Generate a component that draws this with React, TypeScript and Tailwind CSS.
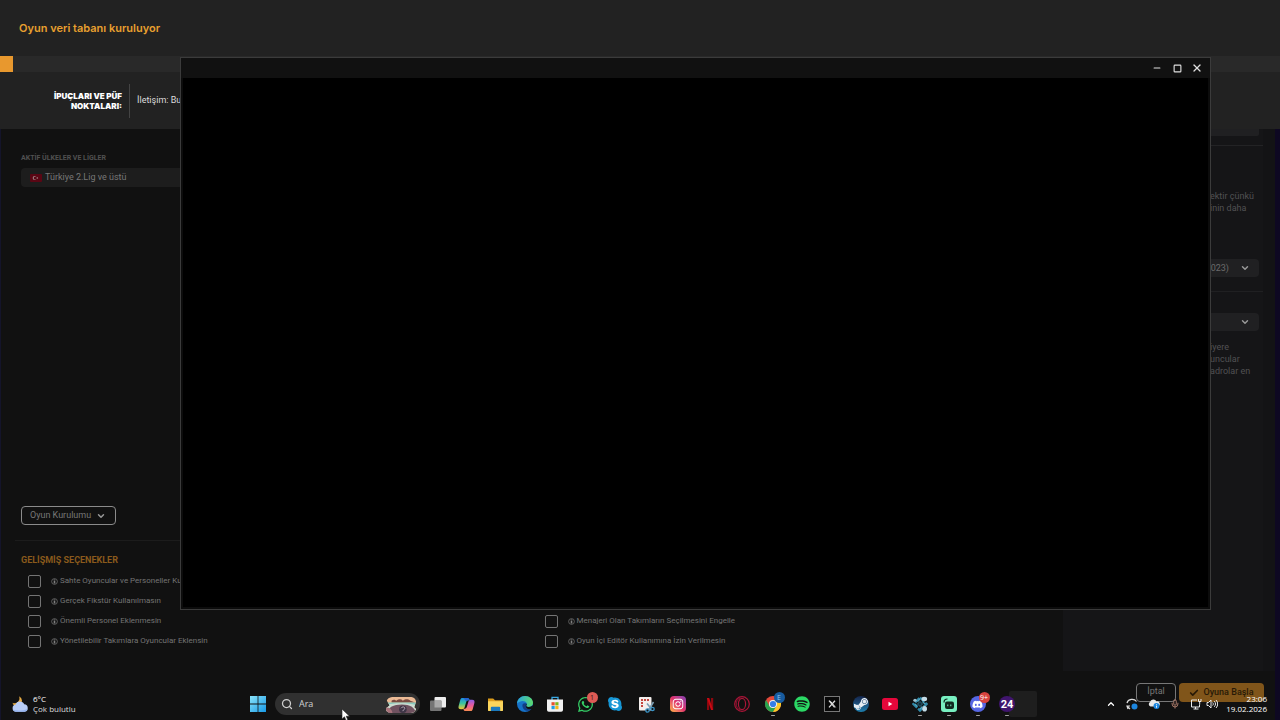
import type { ReactNode } from "react"
import { Check, ChevronDown, ChevronUp, Mic, Minus, Search, Square, X } from "lucide-react"
import { FaDiscord, FaInstagram, FaSkype, FaSpotify, FaSteamSymbol, FaWhatsapp } from "react-icons/fa"

const OPTIONS_LEFT = [
    "Sahte Oyuncular ve Personeller Kullanılsın",
    "Gerçek Fikstür Kullanılmasın",
    "Önemli Personel Eklenmesin",
    "Yönetilebilir Takımlara Oyuncular Eklensin",
]

const OPTIONS_RIGHT = ["Menajeri Olan Takımların Seçilmesini Engelle", "Oyun İçi Editör Kullanımına İzin Verilmesin"]

function InfoIcon() {
    return (
        <svg viewBox="0 0 8 8" className="h-[7px] w-[7px] shrink-0">
            <circle cx="4" cy="4" r="3.3" fill="none" stroke="#666" strokeWidth="1" />
            <path d="M4 1.6v1.200M4 3.500v2.800" stroke="#808080" strokeWidth="1.8" />
        </svg>
    )
}

function Option({ label }: { label: string }) {
    return (
        <label className="flex h-5 items-center whitespace-nowrap text-[8px] text-[#747474]">
            <input
                type="checkbox"
                className="mr-[10px] h-[13px] w-[13px] shrink-0 appearance-none rounded-[2px] border border-[#747474]"
            />
            <InfoIcon />
            <span className="ml-[2px]">{label}</span>
        </label>
    )
}

function Flag() {
    return (
        <svg viewBox="0 0 12 8" className="h-2 w-3">
            <rect width="12" height="8" rx="1" fill="#5a0614" />
            <circle cx="4.6" cy="4" r="1.9" fill="#a08a8c" />
            <circle cx="5.2" cy="4" r="1.5" fill="#5a0614" />
            <circle cx="7.4" cy="4" r=".7" fill="#a08a8c" />
        </svg>
    )
}

function WeatherIcon() {
    return (
        <svg viewBox="0 0 18 18" className="h-[18px] w-[18px]">
            <path d="M8 1.2a5 5 0 0 1-6.6 6.6A5 5 0 0 0 5 11.5a6 6 0 0 0 6-6A5 5 0 0 0 8 1.2Z" fill="#e9ac44" />
            <path d="M4.8 16.8a3.7 3.7 0 0 1-.2-7.3 4.6 4.6 0 0 1 8.6-.2 3.8 3.8 0 0 1 .6 7.5Z" fill="#b9cdf6" />
            <path d="M1.7 14.5c3 1.3 10 1.3 14.8-.6a3.7 3.7 0 0 1-3 2.9H4.8a3.7 3.7 0 0 1-3.1-2.3Z" fill="#94b2ee" />
        </svg>
    )
}

function StartIcon() {
    return (
        <svg viewBox="0 0 16 16" className="h-4 w-4">
            <defs>
                <linearGradient id="start" x1="0" y1="0" x2="1" y2="1">
                    <stop offset="0" stopColor="#8be4fb" />
                    <stop offset="1" stopColor="#1799e6" />
                </linearGradient>
            </defs>
            <path d="M0 0h7.6v7.6H0zM8.4 0H16v7.6H8.4zM0 8.4h7.6V16H0zM8.4 8.4H16V16H8.4z" fill="url(#start)" />
        </svg>
    )
}

function SearchArt() {
    return (
        <svg viewBox="0 0 34 18" className="h-[17px] w-[34px]">
            <defs>
                <clipPath id="art">
                    <path d="M2 5Q3 1 9 1h18q5 0 6 5l-2 6 2 2q-2 4-6 4H7q-6 0-6-5l4-3Z" />
                </clipPath>
            </defs>
            <g clipPath="url(#art)">
                <rect width="34" height="18" fill="#ecbb96" />
                <path d="M7 5c2-2 4-1 5 0 3-2 5-2 7 0 3-2 5-2 8 0l5 2H7Z" fill="#7a4b41" />
                <path d="M0 7h34v3H0z" fill="#86cabe" />
                <path d="M0 10c8-3 26-3 34 0v8H0Z" fill="#cbdcd1" />
                <path d="M3 18c0-6 6-9 15-9s13 3 15 9Z" fill="#705260" />
                <path d="M0 12c5 0 7 2 8 6H0Z" fill="#a8737b" />
                <circle cx="19" cy="14" r="4" fill="#3e3546" />
                <path d="M17 13c1-2 4-2 4 0s-2 1-2 3" stroke="#b7a6b5" strokeWidth="1" fill="none" />
            </g>
        </svg>
    )
}

function TaskViewIcon() {
    return (
        <svg viewBox="0 0 16 16" className="h-4 w-4">
            <rect x="4.5" y="1" width="11.5" height="10.5" rx="1" fill="#ececec" />
            <rect x="0" y="4.5" width="11.5" height="10.5" rx="1" fill="#747474" />
            <path d="M4.500 4.500h7v7h-7z" fill="#a8a8a8" />
        </svg>
    )
}

function CopilotIcon() {
    return (
        <svg viewBox="0 0 18 16" className="h-[15px] w-[17px]">
            <defs>
                <linearGradient id="copA" x1="0" y1="0" x2="0" y2="1">
                    <stop offset="0" stopColor="#1b8de0" />
                    <stop offset=".5" stopColor="#3ec49c" />
                    <stop offset="1" stopColor="#f4c832" />
                </linearGradient>
                <linearGradient id="copB" x1="0" y1="0" x2="0" y2="1">
                    <stop offset="0" stopColor="#8b5fe6" />
                    <stop offset=".5" stopColor="#e95a9b" />
                    <stop offset="1" stopColor="#f98b50" />
                </linearGradient>
            </defs>
            <path d="M4.500 1h5.500c1.500 0 2 1 2.400 2.500H11c-1.600 0-2 .8-2.400 2L7 11c-.4 1.300-1.200 2-2.500 2H3c-2 0-3-1.300-2.400-3.500L2.400 3C2.800 1.700 3.400 1 4.500 1Z" fill="url(#copA)" />
            <path d="M13.500 15H8c-1.500 0-2-1-2.400-2.500H7c1.600 0 2-.8 2.400-2L11 5c.4-1.300 1.200-2 2.500-2H15c2 0 3 1.300 2.400 3.500L15.600 13c-.4 1.300-1 2-2.100 2Z" fill="url(#copB)" />
            <path d="M5.500 1H10c1.500 0 2 1 2.400 2.500H11c-1 0-1.600.4-2 1.200Z" fill="#2463cf" />
        </svg>
    )
}

function ExplorerIcon() {
    return (
        <svg viewBox="0 0 18 16" className="h-[15px] w-[17px]">
            <path d="M1 1.500h5.500L8.500 3.500H16a1 1 0 0 1 1 1V8H1Z" fill="#dd9d1c" />
            <path d="M1 4.500h16V14a1 1 0 0 1-1 1H2a1 1 0 0 1-1-1Z" fill="#fbd55c" />
            <path d="M4 15v-3.500a1 1 0 0 1 1-1h8a1 1 0 0 1 1 1V15Z" fill="#1b79bd" />
        </svg>
    )
}

function EdgeIcon() {
    return (
        <svg viewBox="0 0 16 16" className="h-4 w-4">
            <defs>
                <linearGradient id="edge" x1="0" y1="0" x2="1" y2="0">
                    <stop offset="0" stopColor="#2aa5e0" />
                    <stop offset="1" stopColor="#5cdb6c" />
                </linearGradient>
            </defs>
            <circle cx="8" cy="8" r="8" fill="#1672c8" />
            <path d="M0 7.600C.4 3.200 3.800 0 8 0c4.600 0 8 3.200 8 6.800 0 2.600-2 4.200-4.200 4.200-2 0-2.900-.8-2.400-1.600.5-.9.600-1.500.2-2.400C8.400 4.200 3 4.200 0 7.600Z" fill="url(#edge)" />
            <path d="M5.400 9.500c0 3 2.400 5.500 6 5.300 1.400-.1 2.500-1 3.300-2-3 1.200-6.700.3-6-3.200.2-1 .6-1.300.6-2C7.500 6.600 5.400 7.400 5.400 9.500Z" fill="#123d86" />
            <path d="M9.500 7.500c.5.900.1 1.600-.2 2.100-.4.800.6 1.400 2.500 1.400 1.500 0 2.900-.6 3.600-1.700l.6 1.200-1 2.200c-3 1.200-6.800.3-6.400-3.100Z" fill="#111" />
        </svg>
    )
}

function StoreIcon() {
    return (
        <svg viewBox="0 0 16 16" className="h-4 w-4">
            <path d="M5 4V1.300h6V4" fill="none" stroke="#38a9e5" strokeWidth="1.300" />
            <path d="M0 3.500h16V14a1.800 1.800 0 0 1-1.800 1.800H1.800A1.800 1.800 0 0 1 0 14Z" fill="#f1f1f1" />
            <path d="M4.500 6.200h3.200v3.200H4.500z" fill="#e5502c" />
            <path d="M8.300 6.200h3.200v3.200H8.300z" fill="#7cb518" />
            <path d="M4.500 10h3.200v3.200H4.500z" fill="#1d9de4" />
            <path d="M8.300 10h3.200v3.200H8.300z" fill="#f4b61a" />
        </svg>
    )
}

function SkypeIcon() {
    return (
        <span className="relative flex h-4 w-4 items-center justify-center">
            <span className="absolute h-[11px] w-[11px] rounded-full bg-white" />
            <FaSkype className="relative h-4 w-4 text-[#1697d6]" />
        </span>
    )
}

function SnippingIcon() {
    return (
        <svg viewBox="0 0 17 17" className="h-[17px] w-[17px]">
            <rect x="1" y="1" width="12.500" height="13.500" rx="1" fill="#f3efed" />
            <path d="M3 3h2v2H3zM6 3h2v2H6zM9 3h2v2H9zM3 6h2v2H3zM3 9h2v2H3z" fill="#c4473f" />
            <path d="m9 7.500 4.500 5.500M15.500 6l-5 8" stroke="#7d9fb3" strokeWidth="1.600" />
            <circle cx="9.500" cy="14.500" r="1.700" fill="#111" stroke="#3b94c6" strokeWidth="1.300" />
            <circle cx="14.500" cy="13" r="1.700" fill="#111" stroke="#3b94c6" strokeWidth="1.300" />
        </svg>
    )
}

function NetflixIcon() {
    return (
        <svg viewBox="0 0 8 12" className="h-3 w-2">
            <path d="M1 0h2.200v12L1 12.200zM5 0h2.200v12.200L5 12z" fill="#8d070e" />
            <path d="M1 0h2.200l4 12.200L5 12Z" fill="#c90a13" />
        </svg>
    )
}

function OperaIcon() {
    return (
        <svg viewBox="0 0 16 16" className="h-4 w-4" fill="none" stroke="#ab1538">
            <circle cx="8" cy="8" r="7.300" strokeWidth="1.200" />
            <ellipse cx="8" cy="8" rx="3.600" ry="5.700" strokeWidth="1.200" />
            <path d="M6 2c-5 2-5 10 0 12" strokeWidth=".8" />
        </svg>
    )
}

function ChromeIcon() {
    return (
        <svg viewBox="0 0 16 16" className="h-4 w-4">
            <circle cx="8" cy="8" r="8" fill="#e3493b" />
            <path d="M1.070 4A8 8 0 0 0 8 16l3.500-6L8 8 4.500 10Z" fill="#29a34e" />
            <path d="M8 16A8 8 0 0 0 14.930 4H8v4l3.500 2Z" fill="#f8c92b" />
            <circle cx="8" cy="8" r="4" fill="#f2f2f2" />
            <circle cx="8" cy="8" r="3.100" fill="#337fe8" />
        </svg>
    )
}

function XAppIcon() {
    return (
        <svg viewBox="0 0 16 16" className="h-4 w-4">
            <rect x=".5" y=".5" width="15" height="15" fill="#080808" stroke="#777" />
            <path d="m5 4.700 5.600 6.700M11 4.700l-6 6.700" stroke="#ddd" strokeWidth="1.300" />
            <path d="m6 4.700 5.600 6.700" stroke="#ddd" strokeWidth="1" />
        </svg>
    )
}

function SteamIcon() {
    return (
        <span className="flex h-4 w-4 items-center justify-center overflow-hidden rounded-full bg-linear-to-b from-[#14254c] to-[#1d7fae]">
            <FaSteamSymbol className="h-4 w-4 text-[#e6edf3]" />
        </span>
    )
}

function YouTubeIcon() {
    return (
        <svg viewBox="0 0 16 12" className="h-3 w-4">
            <rect width="16" height="12" rx="2.500" fill="#e6073b" />
            <path d="M6.500 3.700v4.600L10.300 6Z" fill="#fff" />
        </svg>
    )
}

function LatticeIcon() {
    return (
        <svg viewBox="0 0 16 16" className="h-4 w-4">
            <path d="m8 1.500 6.500 6.500L8 14.500 1.500 8Z" fill="none" stroke="#3089a8" strokeWidth="2.400" strokeDasharray="6 1.500" />
            <path d="M5.500 5.500 8 3M10.500 5.500 13 8M10.500 10.500 8 13M5.500 10.500 3 8" stroke="#4ba6c2" strokeWidth="1.400" />
            <path d="m8 5.500 2.500 2.500L8 10.500 5.500 8Z" fill="#132a35" stroke="#2f7f9c" strokeWidth=".8" />
            <ellipse cx="12.300" cy="3" rx="2.800" ry="2.200" fill="#c3dbe6" />
            <ellipse cx="3" cy="4.200" rx="1.700" ry="1.500" fill="#9fc3d1" />
            <ellipse cx="12.600" cy="12.800" rx="2.400" ry="2.800" fill="#c3dbe6" />
        </svg>
    )
}

function CameraAppIcon() {
    return (
        <svg viewBox="0 0 16 16" className="h-4 w-4">
            <rect width="16" height="16" rx="3" fill="#78f0c1" />
            <path d="M3 6.500C3 4.300 4.500 3 6.500 3" fill="none" stroke="#10291f" strokeWidth="1.200" />
            <rect x="4" y="5.500" width="9" height="7.500" rx="2" fill="#10291f" />
            <path d="M6.800 8.500v1.700M9.800 8.500v1.700" stroke="#78f0c1" strokeWidth="1" />
        </svg>
    )
}

function DiscordIcon() {
    return (
        <span className="flex h-4 w-4 items-center justify-center rounded-full bg-[#5666e4]">
            <FaDiscord className="h-[11px] w-[11px] text-white" />
        </span>
    )
}

function ManagerIcon() {
    return (
        <span className="flex h-4 w-4 items-center justify-center rounded-full bg-[#40156e] font-['Roboto',sans-serif] text-[11px] font-bold leading-none text-white">
            24
        </span>
    )
}

interface TaskbarApp {
    name: string
    icon: ReactNode
    slot: string
    badge?: string
    badgeClass?: string
    running?: boolean
}

const APPS: TaskbarApp[] = [
    { name: "Görev Görünümü", icon: <TaskViewIcon />, slot: "w-[29px]" },
    { name: "Copilot", icon: <CopilotIcon />, slot: "w-[29px]" },
    { name: "Dosya Gezgini", icon: <ExplorerIcon />, slot: "w-[29px]" },
    { name: "Microsoft Edge", icon: <EdgeIcon />, slot: "w-[30px]" },
    { name: "Microsoft Store", icon: <StoreIcon />, slot: "w-[30px]" },
    { name: "WhatsApp", icon: <FaWhatsapp className="h-[17px] w-[17px] text-[#35ce66]" />, slot: "w-[30px]", badge: "1", badgeClass: "bg-[#dd5b55] text-[#3a1414]" },
    { name: "Skype", icon: <SkypeIcon />, slot: "w-[30px]" },
    { name: "Ekran Alıntısı Aracı", icon: <SnippingIcon />, slot: "w-[32px]" },
    { name: "Instagram", icon: <span className="flex h-4 w-4 items-center justify-center rounded-[4px] bg-linear-to-tr from-[#fbb13c] via-[#e1306c] to-[#833ab4]"><FaInstagram className="h-3 w-3 text-white" /></span>, slot: "w-[32px]" },
    { name: "Netflix", icon: <NetflixIcon />, slot: "w-[32px]" },
    { name: "Opera", icon: <OperaIcon />, slot: "w-[32px]" },
    { name: "Google Chrome", icon: <ChromeIcon />, slot: "w-[29px]", badge: "E", badgeClass: "bg-[#175b9f] text-[#8fc4ee]", running: true },
    { name: "Spotify", icon: <FaSpotify className="h-4 w-4 text-[#2bd965]" />, slot: "w-[30px]" },
    { name: "X", icon: <XAppIcon />, slot: "w-[29px]" },
    { name: "Steam", icon: <SteamIcon />, slot: "w-[29px]" },
    { name: "YouTube", icon: <YouTubeIcon />, slot: "w-[30px]" },
    { name: "Lattice", icon: <LatticeIcon />, slot: "w-[29px]", running: true },
    { name: "Kamera", icon: <CameraAppIcon />, slot: "w-[29px]", running: true },
    { name: "Discord", icon: <DiscordIcon />, slot: "w-[29px]", badge: "9+", badgeClass: "bg-[#d8433f] text-white", running: true },
    { name: "Football Manager 2024", icon: <ManagerIcon />, slot: "w-[30px]", running: true },
]

function Taskbar() {
    return (
        <footer className="absolute inset-x-0 bottom-0 z-20 grid h-8 grid-cols-[1fr_auto_1fr] items-center font-['Open_Sans','Noto_Sans',sans-serif] text-[8px] leading-[10px] text-[#dedede]">
            <button type="button" className="flex items-center gap-1 justify-self-start pl-[11px] text-left">
                <WeatherIcon />
                <span>
                    <span className="block text-white">6°C</span>
                    <span className="block">Çok bulutlu</span>
                </span>
            </button>

            <div className="flex items-center">
                <button type="button" aria-label="Başlat" className="flex w-[30px] justify-center">
                    <StartIcon />
                </button>
                <label className="ml-[2px] mr-[3px] flex h-[22px] w-[145px] items-center rounded-full bg-[#303030] pl-[6px] pr-0.5">
                    <Search className="h-3 w-3 shrink-0 text-[#d0d0d0]" strokeWidth={2.500} />
                    <input
                        type="text"
                        aria-label="Ara"
                        placeholder="Ara"
                        className="ml-[6px] w-full min-w-0 bg-transparent text-[9px] outline-none placeholder:text-[#d2d2d2]"
                    />
                    <span className="shrink-0">
                        <SearchArt />
                    </span>
                </label>
                {APPS.map((app) => (
                    <button key={app.name} type="button" aria-label={app.name} className={`${app.slot} relative flex h-8 items-center justify-center`}>
                        <span className="relative z-10">
                            {app.icon}
                            {app.badge && (
                                <span className={`absolute -right-[4px] -top-[4px] flex h-[11px] w-[11px] items-center justify-center rounded-full text-[7px] leading-none ${app.badgeClass}`}>
                                    {app.badge}
                                </span>
                            )}
                        </span>
                        {app.running && <span className="absolute bottom-1 z-10 h-px w-1 rounded-full bg-[#a0a0a0]" />}
                    </button>
                ))}
                <span className="-ml-[13px] h-[26px] w-[28px] rounded-[2px] bg-[#1e1e1e]" />
            </div>

            <div className="flex items-center justify-self-end pr-[13px]">
                <button type="button" aria-label="Gizli simgeleri göster" className="mr-[10px]">
                    <ChevronUp className="h-[10px] w-[10px] text-white" strokeWidth={3} />
                </button>
                <button type="button" aria-label="Eşitleme" className="mr-[10px]">
                    <svg viewBox="0 0 12 12" className="h-3 w-3">
                        <path d="M1 5C2 1 8 0 10.500 3.500M2 11l-1-3h3M1 8l3 3" fill="none" stroke="#ddd" strokeWidth="1.200" />
                        <circle cx="8.500" cy="8.500" r="3" fill="#1c86df" />
                    </svg>
                </button>
                <button type="button" aria-label="OneDrive" className="mr-[10px]">
                    <svg viewBox="0 0 12 12" className="h-3 w-3">
                        <path d="M2.500 8.500A2.500 2.500 0 0 1 2 4 3.500 3.500 0 0 1 8.500 3.500 2.600 2.600 0 0 1 10 8.500Z" fill="#e8e8e8" />
                        <circle cx="8.500" cy="8" r="3" fill="#1c86df" />
                        <path d="M8.500 6.300v.8M8.500 7.700v2" stroke="#fff" strokeWidth=".9" />
                    </svg>
                </button>
                <button type="button" aria-label="Mikrofon" className="mr-[10px]">
                    <Mic className="h-[10px] w-[10px] text-[#c28a78]" />
                </button>
                <button type="button" aria-label="Ağ ve ses" className="mr-2 flex items-center gap-1">
                    <svg viewBox="0 0 12 12" className="h-3 w-3" fill="none" stroke="#ececec">
                        <path d="M7 2H1.500v7h8V6.500M3.500 11h5M5.500 9v2M8.500 1v2.500h2.500V1M9.700 3.500v3" />
                    </svg>
                    <svg viewBox="0 0 12 12" className="h-3 w-3" fill="none" stroke="#ececec">
                        <path d="M1 4.500h1.500L5 2v8L2.500 7.500H1ZM6.700 4.500c.8 1 .8 2 0 3M8.300 3.200c1.600 1.800 1.600 3.800 0 5.600M10 2c2.200 2.600 2.200 5.400 0 8" />
                    </svg>
                </button>
                <time className="text-right text-white">
                    <span className="block">23:06</span>
                    <span className="block">19.02.2026</span>
                </time>
            </div>
        </footer>
    )
}

function BlankWindow() {
    return (
        <section
            aria-label="Pencere"
            className="absolute bottom-[110px] left-[180px] right-[69px] top-[57px] z-10 flex flex-col border border-[#3b3b3b] bg-[#0c0c0c]"
        >
            <div className="flex h-5 items-center justify-end gap-[10px] bg-[#111] pr-2 text-[#e0e0e0]">
                <button type="button" aria-label="Simge durumuna küçült">
                    <Minus className="h-[10px] w-[10px]" strokeWidth={2.500} />
                </button>
                <button type="button" aria-label="Ekranı kapla" className="flex h-[10px] w-[10px] items-center justify-center">
                    <Square className="h-[9px] w-[9px]" strokeWidth={3} />
                </button>
                <button type="button" aria-label="Kapat" className="flex h-[10px] w-[10px] items-center justify-center">
                    <X className="h-3 w-3 shrink-0" strokeWidth={2.500} />
                </button>
            </div>
            <div className="mx-0.5 mb-0.5 flex-1 bg-black" />
        </section>
    )
}

function SetupPanel() {
    return (
        <aside className="flex w-[200px] shrink-0 flex-col bg-[#151517] text-[9px] leading-3 text-[#515153]">
            <div className="mr-1 h-[7px] rounded-b-[2px] bg-[#202022]" />
            <hr className="mt-[9px] border-[#232325]" />
            <p className="mt-11 pl-[147px]">
                ektir çünkü
                <br />
                inin daha
            </p>
            <label className="relative mx-1 mt-[45px] block">
                <select aria-label="Veri tabanı" className="block h-[18px] w-full appearance-none rounded-[4px] bg-[#202022] pr-[30px] text-right text-[9px] text-[#6b6b6b]">
                    <option>(2023)</option>
                </select>
                <ChevronDown className="pointer-events-none absolute right-[9px] top-1 h-[10px] w-[10px] text-[#999]" strokeWidth={3.500} />
            </label>
            <hr className="mt-[14px] border-[#202022]" />
            <label className="relative mx-1 mt-[21px] block">
                <select aria-label="Veri tabanı boyutu" className="block h-[18px] w-full appearance-none rounded-[4px] bg-[#202022] text-[9px]">
                    <option />
                </select>
                <ChevronDown className="pointer-events-none absolute right-[9px] top-1 h-[10px] w-[10px] text-[#999]" strokeWidth={3.500} />
            </label>
            <p className="mt-[10px] pl-[147px]">
                iyere
                <br />
                uncular
                <br />
                adrolar en
            </p>
        </aside>
    )
}

export default function App() {
    return (
        <div className="relative flex min-h-screen flex-col overflow-hidden bg-[#111] font-['Roboto',sans-serif]">
            <header className="bg-[#222]">
                <h1 className="px-[19px] pb-5 pt-5 font-['Inter',sans-serif] text-[11px] font-semibold leading-4 text-[#e9a02f]">Oyun veri tabanı kuruluyor</h1>
                <div role="progressbar" aria-label="Kurulum" aria-valuenow={1} className="h-4 bg-[#292929]">
                    <div className="h-full w-[1%] bg-[#e8982e]" />
                </div>
                <div className="flex h-[57px] items-center">
                    <h2 className="w-[122px] text-right font-['Inter',sans-serif] text-[8px] font-black leading-[10px] text-white">
                        İPUÇLARI VE PÜF
                        <br />
                        NOKTALARI:
                    </h2>
                    <div className="ml-[7px] h-[34px] w-px bg-[#444]" />
                    <p className="ml-[7px] text-[9px] text-[#ddd]">İletişim: Bu</p>
                </div>
            </header>

            <main className="flex flex-1 flex-col border-l border-r-[5px] border-l-[#14142a] border-r-[#0e0822]">
                <div className="flex flex-1">
                    <div className="flex min-w-0 flex-1 flex-col">
                        <div className="flex-1 px-5 pt-6">
                            <h3 className="text-[7px] font-bold leading-[10px] text-[#505050]">AKTİF ÜLKELER VE LİGLER</h3>
                            <div className="mt-[5px] flex h-[19px] items-center gap-[3px] rounded-[4px] bg-[#1d1d1d] pl-[9px] text-[9px] text-[#777]">
                                <Flag />
                                <span>Türkiye 2.Lig ve üstü</span>
                            </div>
                        </div>
                        <div className="px-5">
                            <button type="button" className="flex h-[19px] w-[95px] items-center justify-between rounded-[4px] border border-[#8b8b8b] pl-2 pr-[9px] text-[9px] text-[#777]">
                                Oyun Kurulumu
                                <ChevronDown className="h-[10px] w-[10px] text-[#999]" strokeWidth={3.500} />
                            </button>
                        </div>
                        <hr className="ml-[14px] mr-2 mt-[15px] border-[#1c1c1c]" />
                        <section className="px-5 pb-5">
                            <h3 className="mt-3 text-[9px] font-bold leading-[14px] text-[#8a5a1c]">GELİŞMİŞ SEÇENEKLER</h3>
                            <div className="mt-1 grid grid-cols-2 pl-[7px]">
                                <div>
                                    {OPTIONS_LEFT.map((label) => (
                                        <Option key={label} label={label} />
                                    ))}
                                </div>
                                <div className="self-end pl-[9px]">
                                    {OPTIONS_RIGHT.map((label) => (
                                        <Option key={label} label={label} />
                                    ))}
                                </div>
                            </div>
                        </section>
                    </div>
                    <SetupPanel />
                    <div className="w-3 shrink-0 bg-[#131315]" />
                </div>
                <div className="flex justify-end gap-[3px] pb-[18px] pr-[11px] pt-3">
                    <button type="button" className="h-[19px] w-10 rounded-[4px] border border-[#777] pb-1 text-[9px] leading-3 text-[#777]">
                        İptal
                    </button>
                    <button type="button" className="flex h-[19px] w-[85px] items-center justify-center gap-1 rounded-[4px] bg-[#80551a] text-[9px] font-medium text-[#271907]">
                        <Check className="h-[10px] w-[10px]" strokeWidth={4} />
                        Oyuna Başla
                    </button>
                </div>
            </main>

            <BlankWindow />
            <Taskbar />
            <svg viewBox="0 0 10 14" className="absolute left-[341px] top-[708px] z-30 h-[14px] w-[10px]">
                <path d="M1 1v10l2.500-2.200L5 12.500l1.800-.8-1.600-3.500H8.500Z" fill="#fff" stroke="#222" strokeWidth=".6" />
            </svg>
        </div>
    )
}
